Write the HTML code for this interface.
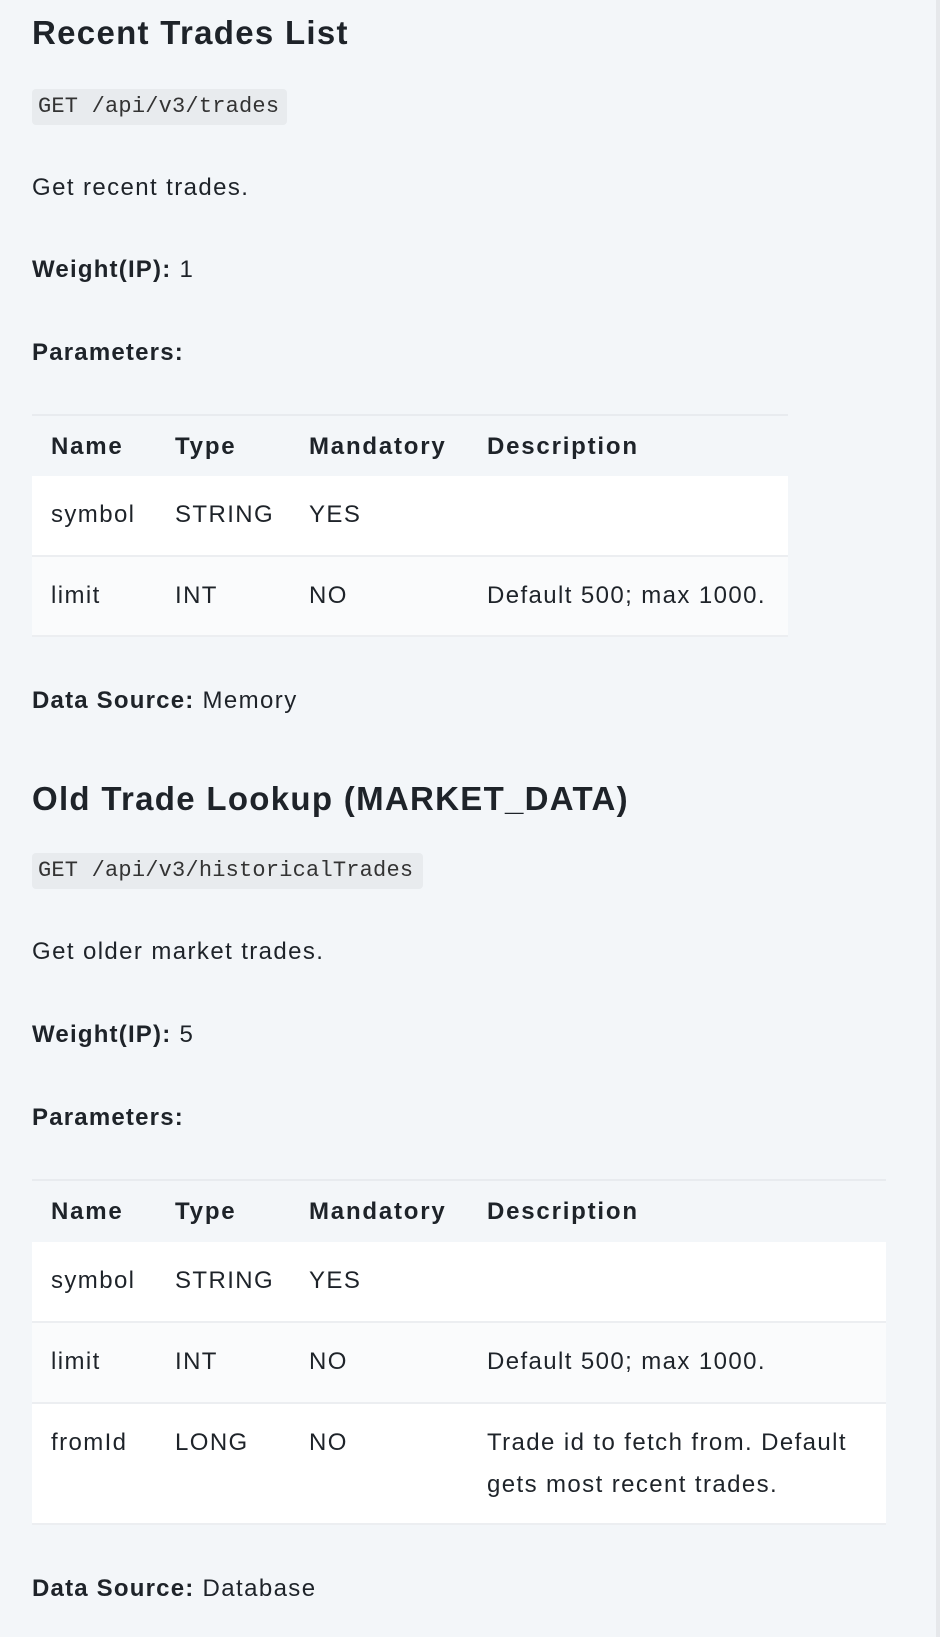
<!DOCTYPE html>
<html><head><meta charset="utf-8"><style>
body{margin:0;width:940px;height:1637px;background:#f3f6f9;font-family:"Liberation Sans",sans-serif;color:#1e2329;position:relative;overflow:hidden}
h2{position:absolute;margin:0;font-size:33px;font-weight:bold;left:32px;line-height:40px;letter-spacing:1.3px}
.code{position:absolute;left:32px;height:36px;background:#e8ebee;border-radius:4px;font-family:"Liberation Mono",monospace;font-size:22px;line-height:36px;padding:0 6px;color:#333;box-sizing:border-box;letter-spacing:0.2px}
.p{position:absolute;left:32px;font-size:24px;line-height:30px;letter-spacing:1.4px;white-space:nowrap}
b{font-weight:bold;letter-spacing:1.2px}
.tbl{position:absolute;left:32px;border-top:2px solid #e8ebef}
.row{position:relative;border-bottom:2px solid #eceef1}
.row span{position:absolute;font-size:24px;line-height:40px;letter-spacing:1.4px;white-space:nowrap}
.hd span{font-weight:bold;letter-spacing:1.8px}
.sb{position:absolute;right:0;top:0;width:4px;height:1637px;background:#e6e8eb}
</style></head><body>
<div class="sb"></div>
<h2 style="top:13px">Recent Trades List</h2>
<div class="code" style="top:89px;width:255px">GET /api/v3/trades</div>
<div class="p" style="top:173px">Get recent trades.</div>
<div class="p" style="top:255px"><b>Weight(IP):</b> 1</div>
<div class="p" style="top:338px"><b>Parameters:</b></div>
<div class="tbl" style="top:414px;width:756px">
 <div class="row hd" style="height:60px;border-bottom:none"><span style="left:19px;top:11px">Name</span><span style="left:143px;top:11px">Type</span><span style="left:277px;top:11px">Mandatory</span><span style="left:455px;top:11px">Description</span></div>
 <div class="row" style="height:79px;background:#fff"><span style="left:19px;top:19px">symbol</span><span style="left:143px;top:19px">STRING</span><span style="left:277px;top:19px">YES</span></div>
 <div class="row" style="height:78px;background:#fafbfc"><span style="left:19px;top:19px">limit</span><span style="left:143px;top:19px">INT</span><span style="left:277px;top:19px">NO</span><span style="left:455px;top:19px">Default 500; max 1000.</span></div>
</div>
<div class="p" style="top:686px"><b>Data Source:</b> Memory</div>
<h2 style="top:779px">Old Trade Lookup (MARKET_DATA)</h2>
<div class="code" style="top:853px;width:391px">GET /api/v3/historicalTrades</div>
<div class="p" style="top:937px">Get older market trades.</div>
<div class="p" style="top:1020px"><b>Weight(IP):</b> 5</div>
<div class="p" style="top:1103px"><b>Parameters:</b></div>
<div class="tbl" style="top:1179px;width:854px">
 <div class="row hd" style="height:61px;border-bottom:none"><span style="left:19px;top:11px">Name</span><span style="left:143px;top:11px">Type</span><span style="left:277px;top:11px">Mandatory</span><span style="left:455px;top:11px">Description</span></div>
 <div class="row" style="height:79px;background:#fff"><span style="left:19px;top:19px">symbol</span><span style="left:143px;top:19px">STRING</span><span style="left:277px;top:19px">YES</span></div>
 <div class="row" style="height:79px;background:#fafbfc"><span style="left:19px;top:19px">limit</span><span style="left:143px;top:19px">INT</span><span style="left:277px;top:19px">NO</span><span style="left:455px;top:19px">Default 500; max 1000.</span></div>
 <div class="row" style="height:119px;background:#fff"><span style="left:19px;top:19px">fromId</span><span style="left:143px;top:19px">LONG</span><span style="left:277px;top:19px">NO</span><span style="left:455px;top:19px">Trade id to fetch from. Default</span><span style="left:455px;top:61px">gets most recent trades.</span></div>
</div>
<div class="p" style="top:1574px"><b>Data Source:</b> Database</div>
</body></html>
